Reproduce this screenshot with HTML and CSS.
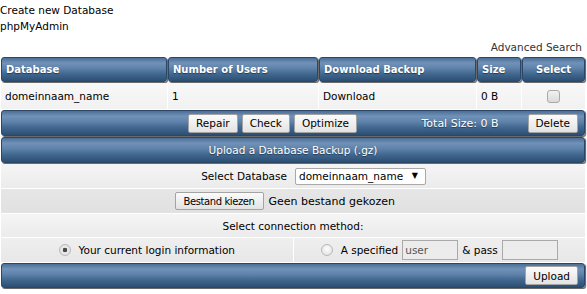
FILE: index.html
```html
<!DOCTYPE html>
<html lang="en">
<head>
    <meta charset="UTF-8">
    <title>MySQL Management</title>
    <link rel="stylesheet" href="styles.css">
</head>
<body>
    <div class="top-links">
        <a href="#" class="plain-link">Create new Database</a><br>
        <a href="#" class="plain-link">phpMyAdmin</a>
    </div>
    <div class="search-link"><a href="#" class="plain-link">Advanced Search</a></div>

    <form class="db-form">
        <table class="list">
            <colgroup>
                <col class="col-name">
                <col class="col-users">
                <col class="col-backup">
                <col class="col-size">
                <col class="col-select">
            </colgroup>
            <tr class="row-head">
                <th class="bar">Database</th>
                <th class="bar">Number of Users</th>
                <th class="bar">Download Backup</th>
                <th class="bar">Size</th>
                <th class="bar center">Select</th>
            </tr>
            <tr class="row-data">
                <td>domeinnaam_name</td>
                <td>1</td>
                <td><a href="#" class="plain-link">Download</a></td>
                <td>0 B</td>
                <td class="center"><input type="checkbox" class="check"></td>
            </tr>
            <tr class="row-bar">
                <td colspan="5" class="bar">
                    <div class="bar-actions">
                        <span class="btn-group">
                            <button type="button" class="btn">Repair</button>
                            <button type="button" class="btn">Check</button>
                            <button type="button" class="btn">Optimize</button>
                        </span>
                        <span class="total">Total Size: 0 B</span>
                        <button type="button" class="btn btn-delete">Delete</button>
                    </div>
                </td>
            </tr>
            <tr class="row-title">
                <td colspan="5" class="bar center upload-title">Upload a Database Backup (.gz)</td>
            </tr>
            <tr class="row-light">
                <td colspan="5" class="light">
                    <div class="split">
                        <span class="split-label">Select Database</span>
                        <span class="select-wrap">
                            <select class="select">
                                <option>domeinnaam_name</option>
                            </select>
                        </span>
                    </div>
                </td>
            </tr>
            <tr class="row-light">
                <td colspan="5" class="dark center">
                    <span class="file-input">
                        <button type="button" class="btn btn-file">Bestand kiezen</button>
                        <span class="file-name">Geen bestand gekozen</span>
                    </span>
                </td>
            </tr>
            <tr class="row-conn">
                <td colspan="5" class="light center">Select connection method:</td>
            </tr>
            <tr class="row-radio">
                <td colspan="5" class="halves-cell">
                    <div class="halves">
                        <label class="half">
                            <input type="radio" name="method" class="radio" checked>
                            Your current login information
                        </label>
                        <label class="half">
                            <input type="radio" name="method" class="radio">
                            A specified
                            <input type="text" class="field" value="user">
                            &amp; pass
                            <input type="password" class="field">
                        </label>
                    </div>
                </td>
            </tr>
            <tr class="row-upload">
                <td colspan="5" class="bar">
                    <div class="bar-actions">
                        <button type="submit" class="btn btn-upload">Upload</button>
                    </div>
                </td>
            </tr>
        </table>
    </form>
</body>
</html>
```

FILE: styles.css
```css
* {
    box-sizing: border-box;
}

body {
    margin: 0;
    font-family: "DejaVu Sans", Verdana, sans-serif;
    font-size: 10.5px;
    color: #000;
    background-color: #fff;
}

.plain-link {
    color: #000;
    text-decoration: none;
}

.top-links {
    padding-top: 2px;
    line-height: 16px;
}

.search-link {
    margin-top: 5px;
    padding-right: 5px;
    line-height: 16px;
    text-align: right;
}

.search-link .plain-link {
    color: #333;
}

/* main listing table */
.list {
    width: 586px;
    margin-top: 1px;
    border-spacing: 1px;
    table-layout: fixed;
}

.col-name { width: 166px; }
.col-users { width: 150px; }
.col-backup { width: 157px; }
.col-size { width: 44px; }
.col-select { width: 63px; }

.list th,
.list td {
    padding: 0 4px;
    text-align: left;
    white-space: nowrap;
}

.list .center {
    text-align: center;
}

.bar {
    color: #fff;
    border: 1px solid #2c4765;
    border-radius: 3px;
    background: linear-gradient(to bottom, #4c6f97 0%, #7192b8 22%, #5e82aa 45%, #41678f 70%, #2c4e72 100%);
    box-shadow: 1px 1px 1px rgba(0, 0, 0, 0.65);
    text-shadow: 0 1px 1px rgba(0, 0, 0, 0.45);
}

th.bar {
    font-size: 10px;
    font-weight: bold;
}

.row-head th { height: 25px; }
.row-data td { height: 26px; }
.row-bar td { height: 26px; }
.row-title td { height: 26px; }
.row-light td { height: 24px; }
.row-conn td { height: 23px; }
.row-radio td { height: 24px; }
.row-upload td { height: 25px; }

.row-data td {
    background: linear-gradient(to bottom, #f8f8f8, #f1f1f1);
}

.light {
    background: linear-gradient(to bottom, #f5f5f5, #ebebeb);
}

.dark {
    background: linear-gradient(to bottom, #e6e6e6, #e1e1e1);
}

.bar-actions {
    display: flex;
    align-items: center;
    padding-right: 2px;
}

.btn-group {
    display: flex;
    gap: 4px;
    margin-left: 182px;
}

.total {
    margin-left: auto;
    margin-right: 29px;
    font-size: 11px;
}

.btn-upload {
    margin-left: auto;
}

.btn {
    height: 19px;
    padding: 0 7px;
    font-family: inherit;
    font-size: 10.5px;
    color: #000;
    border: 1px solid #a3a3a3;
    border-radius: 2px;
    background: linear-gradient(to bottom, #fbfbfb, #e3e3e3);
    text-shadow: none;
}

.check {
    appearance: none;
    width: 13px;
    height: 13px;
    margin: 0;
    vertical-align: middle;
    border: 1px solid #a9a9a9;
    border-radius: 3px;
    background: linear-gradient(to bottom, #f2f2f2, #dadada);
}

/* select database row */
.split {
    display: grid;
    grid-template-columns: 1fr 1fr;
    align-items: center;
}

.split-label {
    text-align: right;
    padding-right: 6px;
}

.select-wrap {
    position: relative;
    display: inline-block;
    width: 131px;
    margin-left: 2px;
}

.select-wrap::after {
    content: "\25BC";
    position: absolute;
    right: 8px;
    top: 3px;
    font-size: 8px;
    color: #000;
    pointer-events: none;
}

.select {
    appearance: none;
    display: block;
    width: 100%;
    height: 17px;
    padding: 0 3px;
    font-family: inherit;
    font-size: 10.5px;
    line-height: 15px;
    color: #000;
    border: 1px solid #a9a9a9;
    border-radius: 2px;
    background: #fff;
}

/* fake file input */
.file-input {
    display: inline-flex;
    align-items: center;
    gap: 5px;
    width: 237px;
}

.btn-file {
    height: 18px;
    padding: 0 8px;
    font-size: 10px;
    letter-spacing: -0.4px;
}

.file-name {
    font-size: 11px;
}

/* connection method row */
.list td.halves-cell {
    padding: 0;
}

.halves {
    display: grid;
    grid-template-columns: 1fr 1fr;
    gap: 1px;
    height: 100%;
}

.half {
    display: flex;
    align-items: center;
    justify-content: center;
    gap: 4px;
    height: 24px;
    background: linear-gradient(to bottom, #efefef, #e7e7e7);
}

.radio {
    appearance: none;
    width: 12px;
    height: 12px;
    margin: 0 4px 0 0;
    border: 1px solid #b9b9b9;
    border-radius: 50%;
    background: radial-gradient(circle at 50% 40%, #fdfdfd, #dcdcdc);
}

.radio:checked {
    background: radial-gradient(circle, #4a4a4a 0 2px, #ededed 2.6px, #d6d6d6);
}

.field {
    width: 56px;
    height: 20px;
    padding: 0 2px;
    font-family: inherit;
    font-size: 10.5px;
    color: #555;
    border: 1px solid #a9a9a9;
    background: #ececec;
}
```
